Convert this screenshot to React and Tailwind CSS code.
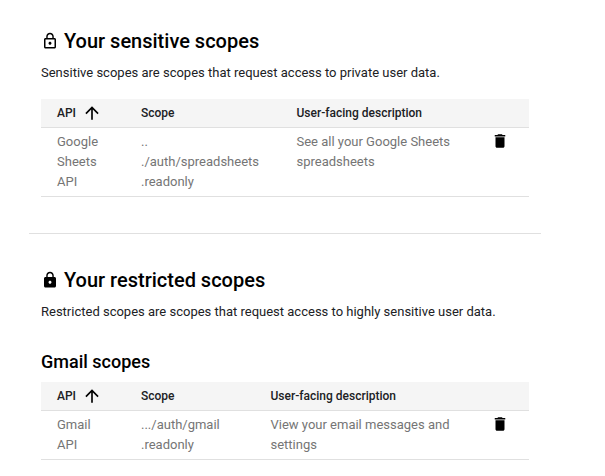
const LockOutline = () => (
  <svg viewBox="0 0 24 24" className="w-[18px] h-[18px] fill-black shrink-0">
    <path d="M12 17c1.1 0 2-.9 2-2s-.9-2-2-2-2 .9-2 2 .9 2 2 2zm6-9h-1V6c0-2.76-2.24-5-5-5S7 3.24 7 6v2H6c-1.1 0-2 .9-2 2v10c0 1.1.9 2 2 2h12c1.1 0 2-.9 2-2V10c0-1.1-.9-2-2-2zM8.9 6c0-1.71 1.39-3.1 3.1-3.1s3.1 1.39 3.1 3.1v2H8.9V6zM18 20H6V10h12v10z" />
  </svg>
);
const LockFilled = () => (
  <svg viewBox="0 0 24 24" className="w-[18px] h-[18px] fill-black shrink-0">
    <path d="M18 8h-1V6c0-2.76-2.24-5-5-5S7 3.24 7 6v2H6c-1.1 0-2 .9-2 2v10c0 1.1.9 2 2 2h12c1.1 0 2-.9 2-2V10c0-1.1-.9-2-2-2zm-6 9c-1.1 0-2-.9-2-2s.9-2 2-2 2 .9 2 2-.9 2-2 2zm3.1-9H8.9V6c0-1.71 1.39-3.1 3.1-3.1 1.71 0 3.1 1.39 3.1 3.1v2z" />
  </svg>
);
const Arrow = () => (
  <svg viewBox="0 0 24 24" className="w-5 h-5 fill-black ml-1.5">
    <path d="M4 12l1.41 1.41L11 7.83V20h2V7.83l5.58 5.59L20 12l-8-8-8 8z" />
  </svg>
);
const Trash = () => (
  <svg viewBox="0 0 24 24" className="w-[18px] h-[18px] fill-black">
    <path d="M6 19c0 1.1.9 2 2 2h8c1.1 0 2-.9 2-2V7H6v12zM19 4h-3.5l-1-1h-5l-1 1H5v2h14V4z" />
  </svg>
);

function ScopeTable({ cols, api, scope, desc }) {
  return (
    <div className="w-[488px]">
      <div className={`grid ${cols} h-[29px] items-center bg-[#f5f5f5] border-b border-[#e0e0e0] text-xs font-medium text-[#202124]`}>
        <div className="pl-4 flex items-center">API<Arrow /></div>
        <div>Scope</div>
        <div>User-facing description</div>
      </div>
      <div className={`grid ${cols} py-1 border-b border-[#e0e0e0] text-[13px] leading-5 text-[#757575]`}>
        <div className="pl-4 pr-8">{api.map((l) => <div key={l}>{l}</div>)}</div>
        <div>{scope.map((l) => <div key={l}>{l}</div>)}</div>
        <div className="flex justify-between pr-5">
          <div>{desc.map((l) => <div key={l}>{l}</div>)}</div>
          <Trash />
        </div>
      </div>
    </div>
  );
}

export default function App() {
  return (
    <div className="w-[605px] h-[476px] overflow-hidden bg-white pl-[29px] font-['Roboto',sans-serif]">
      <div className="w-[512px] pt-[29px]">
        <section className="pl-3 pb-9 border-b border-[#e0e0e0]">
          <h2 className="flex items-center gap-[5px] text-xl leading-6 font-medium text-black">
            <LockOutline /> Your sensitive scopes
          </h2>
          <p className="mt-2.5 text-[13px] leading-5 text-[#202124]">
            Sensitive scopes are scopes that request access to private user data.
          </p>
          <div className="mt-4">
            <ScopeTable
              cols="grid-cols-[100px_155.5px_1fr]"
              api={["Google", "Sheets", "API"]}
              scope={["..", "./auth/spreadsheets", ".readonly"]}
              desc={["See all your Google Sheets", "spreadsheets"]}
            />
          </div>
        </section>
        <section className="pl-3 pt-[34px]">
          <h2 className="flex items-center gap-[5px] text-xl leading-6 font-medium text-black">
            <LockFilled /> Your restricted scopes
          </h2>
          <p className="mt-2.5 text-[13px] leading-5 text-[#202124]">
            Restricted scopes are scopes that request access to highly sensitive user data.
          </p>
          <h3 className="mt-7 text-lg leading-6 font-medium text-black">Gmail scopes</h3>
          <div className="mt-2">
            <ScopeTable
              cols="grid-cols-[100px_129.5px_1fr]"
              api={["Gmail", "API"]}
              scope={[".../auth/gmail", ".readonly"]}
              desc={["View your email messages and", "settings"]}
            />
          </div>
        </section>
      </div>
    </div>
  );
}
